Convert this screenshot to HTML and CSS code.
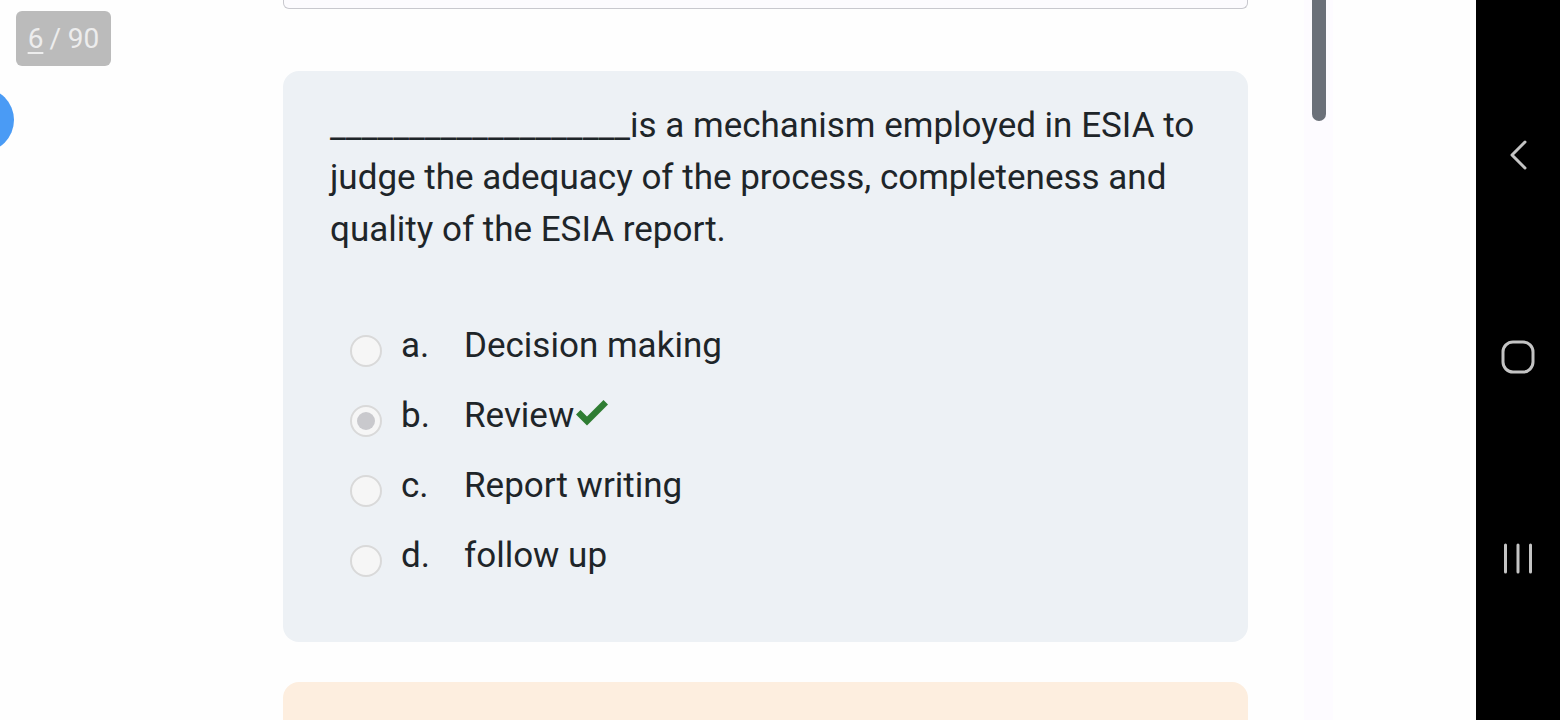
FILE: index.html
```html
<!DOCTYPE html>
<html lang="en">
<head>
<meta charset="utf-8">
<title>Quiz question 6 / 90</title>
<link rel="stylesheet" href="styles.css">
</head>
<body>
<div class="screen">
  <main class="page">
    <div class="counter"><span class="current">6</span> / 90</div>
    <div class="fab"></div>
    <div class="column">
      <div class="prev-card"></div>
      <section class="question-card">
        <p class="question">___________________is a mechanism employed in ESIA to judge the adequacy of the process, completeness and quality of the ESIA report.</p>
        <ul class="options">
          <li class="option"><span class="radio"></span><span class="letter">a.</span><span class="answer">Decision making</span></li>
          <li class="option"><span class="radio checked"></span><span class="letter">b.</span><span class="answer">Review</span><svg class="tick" viewBox="0 0 36 28" width="36" height="28"><path d="M2 15.5 L6.5 11 L13 17.5 L29.5 1 L34 5.5 L13 26.5 Z" fill="#2f7d33"/></svg></li>
          <li class="option"><span class="radio"></span><span class="letter">c.</span><span class="answer">Report writing</span></li>
          <li class="option"><span class="radio"></span><span class="letter">d.</span><span class="answer">follow up</span></li>
        </ul>
      </section>
      <section class="next-card"></section>
    </div>
    <div class="track"><div class="thumb"></div></div>
  </main>
  <nav class="navbar">
    <svg class="nav-icon" viewBox="0 0 30 40" width="30" height="40"><path d="M22 7 L9 20 L22 33" fill="none" stroke="#c4c4c4" stroke-width="3" stroke-linecap="round" stroke-linejoin="round"/></svg>
    <svg class="nav-icon" viewBox="0 0 40 40" width="40" height="40"><rect x="5" y="5" width="30" height="30" rx="10" fill="none" stroke="#c4c4c4" stroke-width="3"/></svg>
    <svg class="nav-icon" viewBox="0 0 40 40" width="40" height="40"><path d="M7.5 6 V33 M20 6 V33 M32.5 6 V33" fill="none" stroke="#c4c4c4" stroke-width="3" stroke-linecap="round"/></svg>
  </nav>
</div>
</body>
</html>
```

FILE: styles.css
```css
* { box-sizing: border-box; }
html, body { margin: 0; padding: 0; }
body {
  width: 1560px;
  height: 720px;
  overflow: hidden;
  background: #fefefe;
  font-family: Roboto, "Liberation Sans", sans-serif;
}
.screen {
  display: flex;
  width: 1560px;
  height: 720px;
}
.page {
  position: relative;
  flex: 1;
  display: flex;
  padding-left: 283px;
  background: #fefefe;
  overflow: hidden;
}
.counter {
  position: absolute;
  left: 16px;
  top: 11px;
  width: 95px;
  height: 55px;
  border-radius: 6px;
  background: #bbbbbb;
  color: #ededed;
  font-size: 28px;
  display: flex;
  align-items: center;
  justify-content: center;
}
.counter .current {
  text-decoration: underline;
  text-underline-offset: 4px;
  text-decoration-thickness: 2px;
  margin-right: 6px;
}
.fab {
  position: absolute;
  left: -50px;
  top: 88px;
  width: 64px;
  height: 64px;
  border-radius: 50%;
  background: #4a9bf5;
}
.column {
  width: 965px;
  display: flex;
  flex-direction: column;
}
.prev-card {
  height: 9px;
  flex: none;
  background: #fcfbfe;
  border: 1.5px solid #c8c8ce;
  border-top: none;
  border-radius: 0 0 6px 6px;
}
.question-card {
  margin-top: 62px;
  height: 571px;
  flex: none;
  background: #edf1f5;
  border-radius: 16px;
  padding: 29px 40px 0 47px;
  color: #1e2529;
}
.question {
  margin: 0;
  font-size: 35px;
  line-height: 52px;
}
.options {
  list-style: none;
  margin: 0;
  padding: 60px 0 0 20px;
  display: flex;
  flex-direction: column;
}
.option {
  height: 70px;
  display: flex;
  align-items: center;
  font-size: 35px;
}
.radio {
  width: 32px;
  height: 32px;
  border-radius: 50%;
  border: 2px solid #d9d9d9;
  background: #f6f6f6;
  flex: none;
  margin-right: 19px;
  display: flex;
  align-items: center;
  justify-content: center;
}
.radio.checked::after {
  content: "";
  width: 18px;
  height: 18px;
  border-radius: 50%;
  background: #c9c9cd;
}
.letter,
.answer {
  padding-bottom: 12px;
}
.letter {
  width: 63px;
  flex: none;
}
.tick {
  margin-top: -16px;
}
.next-card {
  margin-top: 40px;
  height: 120px;
  flex: none;
  background: #fdeedf;
  border-radius: 16px;
}
.track {
  margin-left: 56px;
  width: 29px;
  flex: none;
  background: #fdfbff;
  padding-left: 8px;
}
.thumb {
  width: 14px;
  height: 121px;
  background: #6b7079;
  border-radius: 0 0 7px 7px;
}
.navbar {
  width: 84px;
  flex: none;
  background: #000;
  display: flex;
  flex-direction: column;
  align-items: center;
  padding-top: 135px;
  gap: 162px;
}
.nav-icon { display: block; }
```
